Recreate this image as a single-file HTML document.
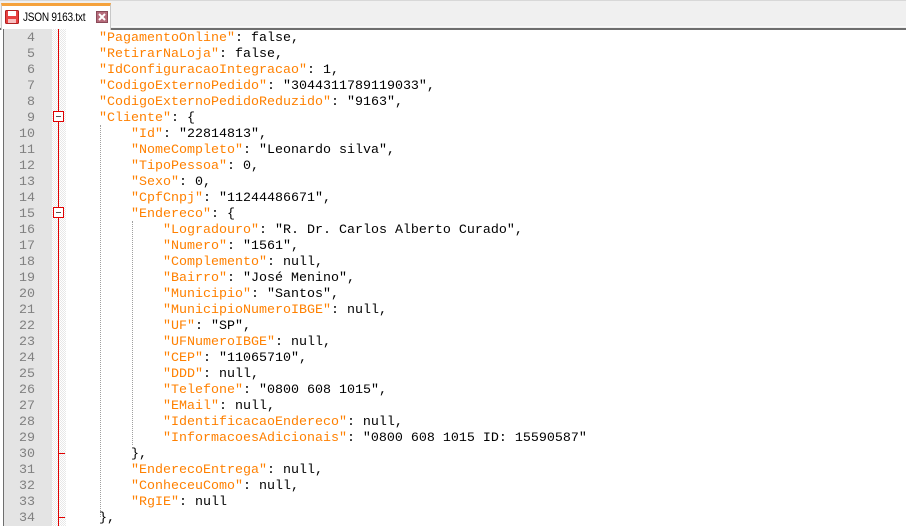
<!DOCTYPE html>
<html><head><meta charset="utf-8"><style>
*{margin:0;padding:0;box-sizing:border-box}
body{width:906px;height:526px;overflow:hidden;background:#fff;position:relative;font-family:"Liberation Mono",monospace}
#tabbar{position:absolute;left:0;top:0;width:906px;height:29px;background:#f0f0f0;border-top:1px solid #d8d8d8}
#tabbar .sep{position:absolute;left:0;top:25px;width:906px;height:1px;background:#fafafa}
#tabbar .dk{position:absolute;left:0;top:27px;width:906px;height:2px;background:#6e6e6e}
#tab{position:absolute;left:1px;top:2px;width:110px;height:27px;background:#fff;border-top:3px solid #f5a23c;border-right:1px solid #c8c8c8;border-left:1px solid #c8c8c8;font:12px "Liberation Sans",sans-serif;color:#000}
#tab span{position:absolute;left:21px;top:4px;letter-spacing:-0.3px;transform:scaleX(0.84);transform-origin:0 0;white-space:nowrap}
#ed{position:absolute;left:3px;top:29px;width:903px;height:497px;border-left:1px solid #6e6e6e}
#ln{position:absolute;left:4px;top:29px;width:48px;height:497px;background:#e4e4e4}
#fold{position:absolute;left:52px;top:29px;width:14px;height:497px;background-color:#fff;background-image:linear-gradient(45deg,#e8e8e8 25%,transparent 25%,transparent 75%,#e8e8e8 75%),linear-gradient(45deg,#e8e8e8 25%,transparent 25%,transparent 75%,#e8e8e8 75%);background-size:2px 2px;background-position:0 0,1px 1px}
#red{position:absolute;left:58px;top:29px;width:1px;height:497px;background:#e00000}
.box{position:absolute;left:53px;width:11px;height:11px;border:1px solid #e00000;background:#fff}
.box:after{content:"";position:absolute;left:2px;top:4px;width:5px;height:1px;background:#555}
.tk{position:absolute;left:59px;width:6px;height:1px;background:#e00000}
.l{position:absolute;left:0;height:16px;line-height:16px;font-size:13.33px;white-space:pre;color:#000}
.n{position:absolute;left:4px;width:31px;text-align:right;height:16px;line-height:16px;font-size:13.33px;color:#808080}
.k{color:#ff8000}
.g{position:absolute;width:0;border-left:1px dotted #a0a0a0}
</style></head><body>
<div id="tabbar"><div class="sep"></div><div class="dk"></div>
<div id="tab">
<svg style="position:absolute;left:3px;top:4px" width="14" height="14" viewBox="0 0 14 14"><rect x="0.5" y="0.5" width="13" height="13" rx="1" fill="#e84040" stroke="#b02020"/><rect x="3" y="1" width="8" height="5" fill="#fff"/><rect x="3" y="9" width="8" height="4" fill="#f8c0c0"/></svg>
<span>JSON 9163.txt</span>
<svg style="position:absolute;left:94px;top:5px" width="12" height="12" viewBox="0 0 12 12"><rect x="0.5" y="0.5" width="11" height="11" fill="#b56a7a" stroke="#8a4a58"/><path d="M3 3L9 9M9 3L3 9" stroke="#fff" stroke-width="2"/></svg>
</div></div>
<div id="ed"></div><div id="ln"></div><div id="fold"></div><div id="red"></div>
<div class="box" style="top:111px"></div>
<div class="box" style="top:207px"></div>
<div class="tk" style="top:453px"></div>
<div class="tk" style="top:517px"></div>
<div class="g" style="left:100px;top:125px;height:392px"></div>
<div class="g" style="left:132px;top:221px;height:224px"></div>
<div id="code" style="position:absolute;left:67px;top:31px">
<div class="l" style="top:0"><span class="k">    "PagamentoOnline"</span>: false,</div>
<div class="l" style="top:16px"><span class="k">    "RetirarNaLoja"</span>: false,</div>
<div class="l" style="top:32px"><span class="k">    "IdConfiguracaoIntegracao"</span>: 1,</div>
<div class="l" style="top:48px"><span class="k">    "CodigoExternoPedido"</span>: "3044311789119033",</div>
<div class="l" style="top:64px"><span class="k">    "CodigoExternoPedidoReduzido"</span>: "9163",</div>
<div class="l" style="top:80px"><span class="k">    "Cliente"</span>: {</div>
<div class="l" style="top:96px"><span class="k">        "Id"</span>: "22814813",</div>
<div class="l" style="top:112px"><span class="k">        "NomeCompleto"</span>: "Leonardo silva",</div>
<div class="l" style="top:128px"><span class="k">        "TipoPessoa"</span>: 0,</div>
<div class="l" style="top:144px"><span class="k">        "Sexo"</span>: 0,</div>
<div class="l" style="top:160px"><span class="k">        "CpfCnpj"</span>: "11244486671",</div>
<div class="l" style="top:176px"><span class="k">        "Endereco"</span>: {</div>
<div class="l" style="top:192px"><span class="k">            "Logradouro"</span>: "R. Dr. Carlos Alberto Curado",</div>
<div class="l" style="top:208px"><span class="k">            "Numero"</span>: "1561",</div>
<div class="l" style="top:224px"><span class="k">            "Complemento"</span>: null,</div>
<div class="l" style="top:240px"><span class="k">            "Bairro"</span>: "José Menino",</div>
<div class="l" style="top:256px"><span class="k">            "Municipio"</span>: "Santos",</div>
<div class="l" style="top:272px"><span class="k">            "MunicipioNumeroIBGE"</span>: null,</div>
<div class="l" style="top:288px"><span class="k">            "UF"</span>: "SP",</div>
<div class="l" style="top:304px"><span class="k">            "UFNumeroIBGE"</span>: null,</div>
<div class="l" style="top:320px"><span class="k">            "CEP"</span>: "11065710",</div>
<div class="l" style="top:336px"><span class="k">            "DDD"</span>: null,</div>
<div class="l" style="top:352px"><span class="k">            "Telefone"</span>: "0800 608 1015",</div>
<div class="l" style="top:368px"><span class="k">            "EMail"</span>: null,</div>
<div class="l" style="top:384px"><span class="k">            "IdentificacaoEndereco"</span>: null,</div>
<div class="l" style="top:400px"><span class="k">            "InformacoesAdicionais"</span>: "0800 608 1015 ID: 15590587"</div>
<div class="l" style="top:416px">        },</div>
<div class="l" style="top:432px"><span class="k">        "EnderecoEntrega"</span>: null,</div>
<div class="l" style="top:448px"><span class="k">        "ConheceuComo"</span>: null,</div>
<div class="l" style="top:464px"><span class="k">        "RgIE"</span>: null</div>
<div class="l" style="top:480px">    },</div>
</div>
<div style="position:absolute;left:0;top:31px">
<div class="n" style="top:0">4</div><div class="n" style="top:16px">5</div><div class="n" style="top:32px">6</div><div class="n" style="top:48px">7</div><div class="n" style="top:64px">8</div><div class="n" style="top:80px">9</div><div class="n" style="top:96px">10</div><div class="n" style="top:112px">11</div><div class="n" style="top:128px">12</div><div class="n" style="top:144px">13</div><div class="n" style="top:160px">14</div><div class="n" style="top:176px">15</div><div class="n" style="top:192px">16</div><div class="n" style="top:208px">17</div><div class="n" style="top:224px">18</div><div class="n" style="top:240px">19</div><div class="n" style="top:256px">20</div><div class="n" style="top:272px">21</div><div class="n" style="top:288px">22</div><div class="n" style="top:304px">23</div><div class="n" style="top:320px">24</div><div class="n" style="top:336px">25</div><div class="n" style="top:352px">26</div><div class="n" style="top:368px">27</div><div class="n" style="top:384px">28</div><div class="n" style="top:400px">29</div><div class="n" style="top:416px">30</div><div class="n" style="top:432px">31</div><div class="n" style="top:448px">32</div><div class="n" style="top:464px">33</div><div class="n" style="top:480px">34</div>
</div>
</body></html>
